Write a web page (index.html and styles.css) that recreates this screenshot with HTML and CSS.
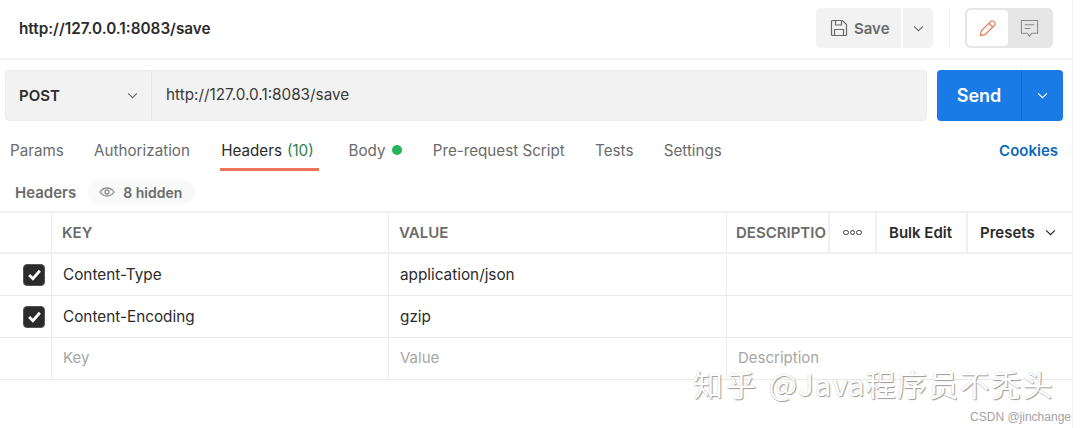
FILE: index.html
```html
<!DOCTYPE html>
<html lang="en">
<head>
<meta charset="utf-8">
<title>Request</title>
<link rel="stylesheet" href="styles.css">
</head>
<body>
<main class="app">
  <header class="top">
    <h1 class="title">http://127.0.0.1:8083/save</h1>
    <div class="top-actions">
      <button class="save"><svg class="save-icon" viewBox="0 0 18 18" width="18" height="18"><path d="M2.5 1.5h10l4 4v10a1 1 0 0 1-1 1h-13a1 1 0 0 1-1-1v-13a1 1 0 0 1 1-1z"/><path d="M5.5 1.5v4.5h6v-4.5M4.5 16.5v-6h9v6"/></svg>Save</button>
      <button class="save-more"><svg class="chev" viewBox="0 0 12 8" width="11" height="7"><path d="M1 1.500l5 5 5-5"/></svg></button>
      <span class="vr"></span>
      <div class="mode">
        <span class="mode-on"><svg class="pencil" viewBox="0 0 20 20" width="19" height="19"><path d="M2.500 17.500l1-5L13.500 2.500a2 2 0 0 1 3 0l1 1a2 2 0 0 1 0 3L7.500 16.500z"/><path d="M11.500 4.500l4 4"/></svg></span>
        <span class="mode-off"><svg class="comment" viewBox="0 0 20 20" width="19" height="19"><path d="M1.500 1.500h17v13.500h-6l-2.500 3-2.500-3h-6z"/><path d="M5 6h10M5 10h6"/></svg></span>
      </div>
    </div>
  </header>

  <section class="req">
    <div class="url-box">
      <div class="method">POST<svg class="chev" viewBox="0 0 12 8" width="11" height="7"><path d="M1 1.500l5 5 5-5"/></svg></div>
      <div class="url">http://127.0.0.1:8083/save</div>
    </div>
    <div class="send">
      <span class="send-label">Send</span>
      <span class="send-more"><svg class="chev chev-w" viewBox="0 0 12 8" width="11" height="7"><path d="M1 1.500l5 5 5-5"/></svg></span>
    </div>
  </section>

  <nav class="tabs">
    <span class="tab">Params</span>
    <span class="tab">Authorization</span>
    <span class="tab tab-active">Headers <em class="count">(10)</em></span>
    <span class="tab">Body <i class="dot"></i></span>
    <span class="tab">Pre-request Script</span>
    <span class="tab">Tests</span>
    <span class="tab">Settings</span>
    <span class="cookies">Cookies</span>
  </nav>

  <div class="sub">
    <span class="sub-title">Headers</span>
    <span class="pill"><svg class="eye" viewBox="0 0 16 10" width="16" height="10"><path d="M1 5c2-3 4.500-4 7-4s5 1 7 4c-2 3-4.500 4-7 4s-5-1-7-4z"/><circle cx="8" cy="5" r="2"/></svg>8 hidden</span>
  </div>

  <section class="table">
    <div class="row head">
      <div class="cell"></div>
      <div class="cell k">KEY</div>
      <div class="cell k">VALUE</div>
      <div class="cell desc-head">
        <span class="desc-label">DESCRIPTIO</span>
        <span class="tool dots"><i></i><i></i><i></i></span>
        <span class="tool bulk">Bulk Edit</span>
        <span class="tool presets">Presets<svg class="chev chev-d" viewBox="0 0 12 8" width="11" height="7"><path d="M1 1.500l5 5 5-5"/></svg></span>
      </div>
    </div>
    <div class="row">
      <div class="cell check"><span class="box"><svg viewBox="0 0 14 12" width="15" height="13"><path d="M2 6.500l3.500 3.500 6.500-7.500"/></svg></span></div>
      <div class="cell v">Content-Type</div>
      <div class="cell v">application/json</div>
      <div class="cell"></div>
    </div>
    <div class="row">
      <div class="cell check"><span class="box"><svg viewBox="0 0 14 12" width="15" height="13"><path d="M2 6.500l3.500 3.500 6.500-7.500"/></svg></span></div>
      <div class="cell v">Content-Encoding</div>
      <div class="cell v">gzip</div>
      <div class="cell"></div>
    </div>
    <div class="row">
      <div class="cell"></div>
      <div class="cell v ph">Key</div>
      <div class="cell v ph">Value</div>
      <div class="cell v ph">Description</div>
    </div>
  </section>
</main>
<div class="wm"><span class="wm-a">知乎 </span><span class="wm-b">@Java</span>程序员不秃头</div>
<div class="csdn">CSDN @jinchange</div>
</body>
</html>
```
FILE: styles.css
```css
* { box-sizing: border-box; }
html, body { margin: 0; height: 428px; overflow: hidden; background: #fff; }
body { font-family: Inter, "Liberation Sans", sans-serif; color: #212121; position: relative; }
button { font: inherit; border: 0; padding: 0; }
svg { display: block; fill: none; }
.app { width: 1073px; height: 428px; border-right: 1px solid #f2f2f2; }

.top { height: 60px; display: flex; align-items: center; justify-content: space-between; padding: 0 19px 2px 19px; border-bottom: 2px solid #f1f1f1; }
.title { margin: 0; font-size: 15.3px; font-weight: 600; color: #2b2b2b; }
.top-actions { display: flex; align-items: center; }
.save { width: 85px; height: 40px; background: #f2f2f2; color: #6b6b6b; border-radius: 5px 0 0 5px; font-size: 15px; font-weight: 600; display: flex; align-items: center; gap: 6px; padding-left: 14px; }
.save-icon path { stroke: #6b6b6b; stroke-width: 1.200; }
.save-more { width: 30px; height: 40px; margin-left: 2px; background: #f2f2f2; border-radius: 0 5px 5px 0; display: flex; align-items: center; justify-content: center; }
.chev path { stroke: #6b6b6b; stroke-width: 1.300; }
.chev-w path { stroke: #fff; }
.chev-d path { stroke: #212121; }
.vr { width: 1px; height: 40px; background: #f2f2f2; margin: 0 15px 0 16px; }
.mode { width: 88px; height: 40px; background: #e6e6e6; border-radius: 5px; padding: 2px; display: flex; }
.mode-on { width: 41px; height: 36px; background: #fff; border-radius: 4px; display: flex; align-items: center; justify-content: center; }
.mode-off { flex: 1; display: flex; align-items: center; justify-content: center; }
.pencil path { stroke: #e8744f; stroke-width: 1.200; }
.comment path { stroke: #8a8a8a; stroke-width: 1.100; }

.req { display: flex; gap: 10px; padding: 10px 9px 0 5px; }
.url-box { flex: 1; height: 51px; display: flex; background: #f2f2f2; border: 1px solid #ececec; border-radius: 4px; }
.method { width: 146px; padding: 0 13px; display: flex; align-items: center; justify-content: space-between; font-size: 15px; font-weight: 600; color: #2b2b2b; border-right: 1px solid #e6e6e6; }
.url { padding: 0 14px 2px; display: flex; align-items: center; font-size: 15.3px; color: #3a3a3a; }
.send { width: 126px; height: 51px; display: flex; background: #1a7ae6; color: #fff; border-radius: 4px; }
.send-label { width: 85px; display: flex; align-items: center; justify-content: center; font-size: 18px; font-weight: 600; border-right: 1px solid #1668c9; }
.send-more { flex: 1; display: flex; align-items: center; justify-content: center; }

.tabs { height: 55px; display: flex; align-items: flex-start; gap: 30.300px; padding: 18px 14px 0 10px; font-size: 15.200px; color: #6b6b6b; }
.tab { height: 32px; display: flex; align-items: flex-start; gap: 5px; padding-top: 2px; }
.tab-active { color: #2b2b2b; border-bottom: 3px solid #ef7459; width: 99px; margin-right: -1px; padding-left: 1px; }
.count { font-style: normal; color: #2f7d4f; }
.dot { width: 10px; height: 10px; border-radius: 50%; background: #22b455; margin: 4px 0 0 2px; }
.cookies { margin-left: auto; margin-top: 2px; color: #0f69b8; font-weight: 600; font-size: 15px; }

.sub { height: 35px; display: flex; align-items: center; gap: 11px; padding: 4px 0 7px 15px; }
.sub-title { font-size: 15px; font-weight: 600; color: #6b6b6b; }
.pill { height: 24px; padding: 0 13px 0 12px; display: flex; align-items: center; gap: 8px; background: #f9f9f9; border-radius: 12px; font-size: 14px; font-weight: 600; color: #6b6b6b; }
.eye path, .eye circle { stroke: #8f8f8f; stroke-width: 1.300; }

.table { border-top: 2px solid #f0f0f0; }
.row { height: 42px; display: grid; grid-template-columns: 52px 337px 338px 1fr; border-bottom: 1px solid #e9e9e9; }
.head { height: 41px; border-bottom-width: 2px; border-bottom-color: #f0f0f0; }
.cell { border-right: 1px solid #ececec; display: flex; align-items: center; font-size: 15px; }
.cell:last-child { border-right: 0; }
.k { padding: 0 10px; color: #6b6b6b; font-weight: 600; font-size: 15px; }
.v { padding: 0 11px; color: #2b2b2b; font-size: 15.300px; }
.v.ph { color: #a6a6a6; font-size: 15px; padding-bottom: 2px; }
.desc-head { padding-left: 9px; }
.desc-label { width: 92px; overflow: hidden; color: #6b6b6b; font-weight: 600; white-space: nowrap; }
.tool { height: 100%; display: flex; align-items: center; justify-content: center; border-left: 2px solid #f0f0f0; font-weight: 600; color: #2b2b2b; }
.dots { width: 47px; gap: 1px; }
.dots i { width: 5.500px; height: 5.500px; border: 1.200px solid #3a3a3a; border-radius: 50%; }
.bulk { width: 91px; padding-right: 2px; }
.presets { width: 107px; gap: 10px; justify-content: flex-start; padding-left: 12px; }
.check { padding-left: 23px; }
.box { width: 22px; height: 22px; border-radius: 4px; background: #2b2b2b; border: 1px solid #555; display: flex; align-items: center; justify-content: center; }
.box svg path { stroke: #fff; stroke-width: 2.600; }

.wm { position: absolute; left: 693px; top: 368px; font-family: "Noto Sans CJK SC", "Liberation Sans", sans-serif; font-size: 30px; line-height: 30px; color: #fff; letter-spacing: 1.400px; white-space: pre; text-shadow: 1px 1px 1px #9a9a9a, 0 0 1px #bbb; }
.wm-a { letter-spacing: 3px; }
.wm-b { letter-spacing: 0.700px; }
.csdn { position: absolute; right: 9px; top: 409px; font-family: "Liberation Sans", sans-serif; font-size: 12px; line-height: 16px; color: #a3a3a3; white-space: nowrap; }
```
